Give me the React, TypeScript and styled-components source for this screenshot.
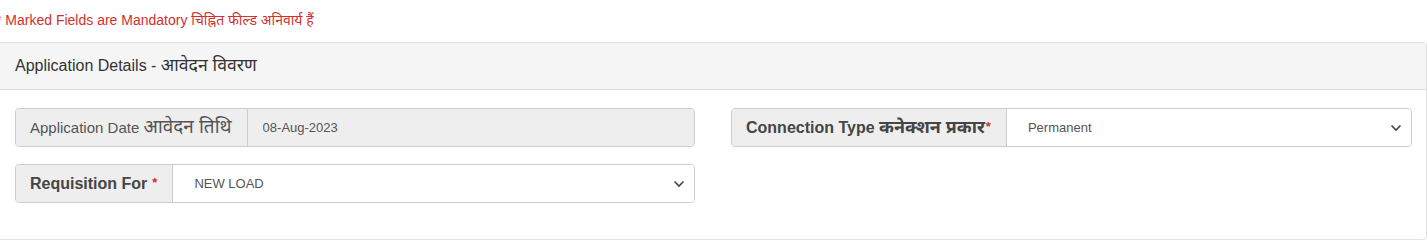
import styled, { createGlobalStyle } from "styled-components";

const GlobalStyle = createGlobalStyle`
  html, body {
    margin: 0;
    padding: 0;
    background: #fff;
    font-family: "Liberation Sans", Arial, "Noto Sans", sans-serif;
    overflow: hidden;
  }
`;

const Page = styled.div`
  width: 1428px;
`;

const Mandatory = styled.p`
  margin: 0 0 0 -4px;
  padding: 12px 0 0;
  height: 30px;
  box-sizing: border-box;
  font-size: 14px;
  line-height: 16px;
  color: #d0302c;
  white-space: nowrap;
`;

// Devanagari runs in a slightly wider face size so they match the reference widths
const Hi = styled.span<{ $scale?: number }>`
  font-size: ${({ $scale }) => $scale ?? 1}em;
  line-height: 1;
`;

const Panel = styled.section`
  margin-top: 12px;
  width: 1427px;
  border: 1px solid #e3e3e3;
  border-left: none;
  border-radius: 0 4px 4px 0;
  box-sizing: border-box;
`;

const PanelHeading = styled.div`
  height: 46px;
  padding: 0 15px;
  display: flex;
  align-items: center;
  background: #f5f5f5;
  border-bottom: 1px solid #ddd;
  font-size: 16px;
  color: #333;
  white-space: pre;
`;

const PanelBody = styled.div`
  display: grid;
  grid-template-columns: 680px 681px;
  column-gap: 36px;
  row-gap: 17px;
  align-content: start;
  padding: 18px 15px 35px;
  height: 149px;
  box-sizing: border-box;
`;

const InputGroup = styled.div`
  display: flex;
  height: 39px;
  border: 1px solid #ccc;
  border-radius: 4px;
  overflow: hidden;
  box-sizing: border-box;
  position: relative;
`;

const Addon = styled.label<{ $bold?: boolean }>`
  flex: none;
  display: flex;
  align-items: center;
  padding: 0 15px 0 14px;
  background: #eee;
  border-right: 1px solid #ccc;
  font-size: ${({ $bold }) => ($bold ? 16 : 15)}px;
  font-weight: ${({ $bold }) => ($bold ? 700 : 400)};
  color: ${({ $bold }) => ($bold ? "#454545" : "#555")};
  white-space: pre;
`;

const Star = styled.span<{ $gap?: boolean }>`
  color: #d0302c;
  margin-left: ${({ $gap }) => ($gap ? "5px" : "1px")};
  font-size: 13px;
  align-self: flex-start;
  margin-top: 10px;
`;

const ReadonlyValue = styled.input`
  flex: 1;
  min-width: 0;
  border: none;
  outline: none;
  padding: 0 15px;
  background: #eee;
  font-family: inherit;
  font-size: 13px;
  color: #555;
`;

const Select = styled.select<{ $pad: number }>`
  flex: 1;
  min-width: 0;
  border: none;
  outline: none;
  appearance: none;
  background: #fff;
  padding: 0 30px 0 ${({ $pad }) => $pad}px;
  font-family: inherit;
  font-size: 13px;
  color: #555;
`;

const Chevron = styled.svg`
  position: absolute;
  right: 9px;
  top: 50%;
  margin-top: -4px;
  width: 12px;
  height: 8px;
  pointer-events: none;
`;

const ArrowDown = () => (
  <Chevron viewBox="0 0 12 8">
    <path d="M1.5 1.5 L6 6 L10.5 1.5" fill="none" stroke="#444" strokeWidth="1.6" />
  </Chevron>
);

export default function App() {
  return (
    <Page>
      <GlobalStyle />
      <Mandatory>* Marked Fields are Mandatory चिह्नित फील्ड अनिवार्य हैं</Mandatory>
      <Panel>
        <PanelHeading>
          Application Details - <Hi $scale={1.1}>आवेदन विवरण</Hi>
        </PanelHeading>
        <PanelBody>
          <InputGroup>
            <Addon>
              Application Date <Hi $scale={1.26}>आवेदन तिथि</Hi>
            </Addon>
            <ReadonlyValue value="08-Aug-2023" readOnly />
          </InputGroup>
          <InputGroup>
            <Addon $bold>
              Connection Type <Hi $scale={1.12}>कनेक्शन प्रकार</Hi>
              <Star>*</Star>
            </Addon>
            <Select $pad={21} defaultValue="Permanent">
              <option>Permanent</option>
              <option>Temporary</option>
            </Select>
            <ArrowDown />
          </InputGroup>
          <InputGroup>
            <Addon $bold>
              Requisition For<Star $gap>*</Star>
            </Addon>
            <Select $pad={21} defaultValue="NEW LOAD">
              <option>NEW LOAD</option>
              <option>LOAD CHANGE</option>
            </Select>
            <ArrowDown />
          </InputGroup>
        </PanelBody>
      </Panel>
    </Page>
  );
}
